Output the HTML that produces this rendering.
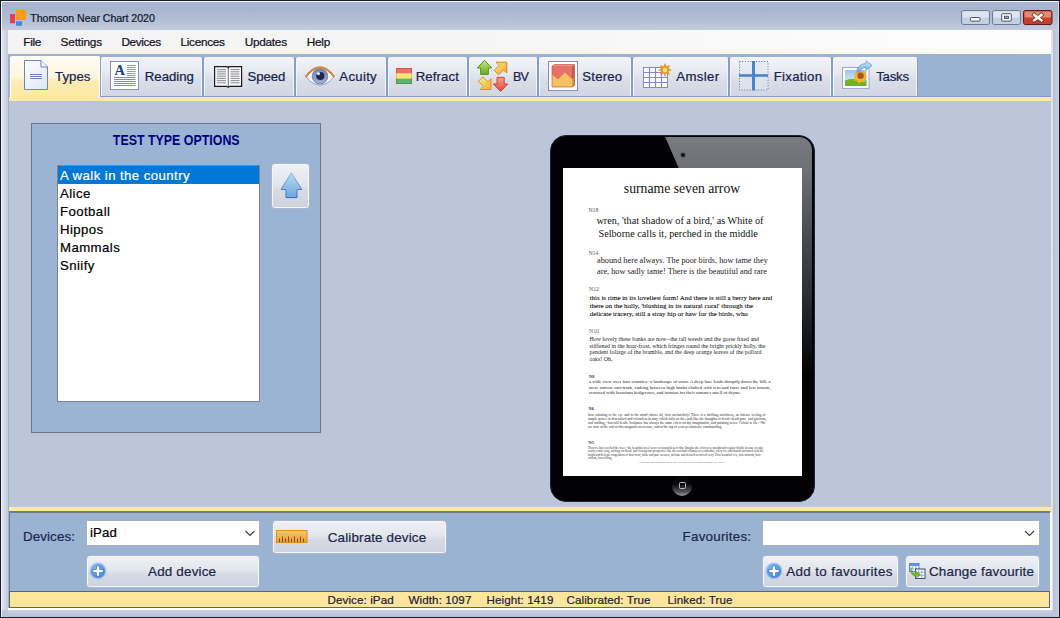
<!DOCTYPE html>
<html><head><meta charset="utf-8"><title>Thomson Near Chart 2020</title>
<style>
*{box-sizing:border-box;margin:0;padding:0}
html,body{width:1060px;height:618px;overflow:hidden}
body{position:relative;font-family:"Liberation Sans",sans-serif;color:#10182c;background:#b6c0d6}
#frame{position:absolute;left:0;top:0;width:1060px;height:618px;background:linear-gradient(180deg,#aab6ce 0px,#a7b5ce 8px,#b4c0d6 20px,#c3ccdf 29px,#c0c9dc 50%,#bcc5d9 100%);border:1px solid #161d2c;border-bottom-width:1.5px}
#frameHi{position:absolute;left:1px;top:1px;width:1058px;height:616px;border:1px solid #f2f4f9;border-right-color:#cfd5e3;border-bottom:none}
#frameL{position:absolute;left:2px;top:30px;width:7px;height:580px;background:linear-gradient(90deg,#dde2ed 0,#c4ccdd 85%,#9eb0cc 86%,#9eb0cc 100%)}
#frameR{position:absolute;left:1051px;top:30px;width:8px;height:580px;background:linear-gradient(90deg,#dde2ec 0,#dde2ec 20%,#b8c1d5 26%,#c7cede 100%)}
#whiteR{position:absolute;left:1050px;top:512px;width:2px;height:97px;background:#f4f6fa}
#frameB{position:absolute;left:8px;top:608px;width:1044px;height:9px;background:linear-gradient(180deg,#fff 0,#fff 22%,#cbd2e1 23%,#b5bed3 100%)}
.tx{position:absolute;white-space:nowrap;line-height:16px;-webkit-text-stroke:0.22px currentColor}
#menubar{position:absolute;left:8px;top:30px;width:1043px;height:24px;background:linear-gradient(180deg,rgba(255,255,255,0) 70%,rgba(250,240,215,0.45) 100%),linear-gradient(90deg,#f4f4f5 0,#f6f6f7 50%,#fcfcfd 85%,#fdfdfe 100%)}
#tabstrip{position:absolute;left:9px;top:54px;width:1042px;height:43px;background:#9bb3d3}
#tabline{position:absolute;left:9px;top:96px;width:1042px;height:1px;background:#7d9dca}
.tab{position:absolute;top:57px;height:39px;border:1px solid #f3f5fa;border-bottom:none;border-radius:2px 2px 0 0;background:linear-gradient(180deg,#f3f4f8 0,#e7eaf1 35%,#d9dde8 60%,#d0d6e2 100%);box-shadow:-1px 0 0 #7fa0cd,1px 0 0 #7fa0cd}
.tab.active{top:56px;height:42px;background:linear-gradient(180deg,#fffcf3 0,#fef6e0 48%,#fdecb4 60%,#fde9a3 100%);border-color:#fffdf6;box-shadow:none}
#ystrip1{position:absolute;left:9px;top:97px;width:1042px;height:4px;background:#fde9a3}
#content{position:absolute;left:9px;top:101px;width:1042px;height:406px;background:#bcc6db}
#ystrip2{position:absolute;left:9px;top:507px;width:1042px;height:4px;background:#fde9a3}
#bottom{position:absolute;left:9px;top:511px;width:1041px;height:81px;background:#9bb3d3;border-top:2px solid #747c8c;border-left:1px solid #747c8c}
#status{position:absolute;left:9px;top:591px;width:1041px;height:17px;background:#fde69c;border:1px solid #5c6575}
#panel{position:absolute;left:31px;top:123px;width:290px;height:310px;background:#9cb4d3;border:1px solid #6a7789}
#ptitle{position:absolute;left:31px;top:129.5px;width:290px;text-align:center;font-weight:bold;font-size:15.5px;line-height:19px;color:#000080;white-space:nowrap}
#ptitle span{display:inline-block;transform:scaleX(0.8);transform-origin:50% 50%}
#list{position:absolute;left:57px;top:165px;width:203px;height:237px;background:#fff;border:1px solid #7c8594}
#list div{position:absolute;left:0px;width:201px;height:18px;font-size:13.2px;line-height:20px;padding-left:2px;white-space:nowrap;color:#000;letter-spacing:0.43px;-webkit-text-stroke:0.2px currentColor}
#list div.sel{background:#0078d7;color:#fff}
.btn{position:absolute;border:1px solid #f4f6fa;border-radius:2.5px;background:linear-gradient(180deg,#eef0f5 0,#e3e6ed 45%,#d6dae3 60%,#ced3de 100%);box-shadow:0 0 0 1px #a9b8cf}
.combo{position:absolute;background:#fff;border:1px solid #a7afbf}
#ipad{position:absolute;left:550px;top:135px;width:265px;height:367px;border-radius:16px;background:#020204;border:1.5px solid #1a2434;overflow:hidden}
#glarebox{position:absolute;left:1px;top:1px;width:260px;height:362px;border-radius:13px;overflow:hidden}
#glare{position:absolute;left:-2.5px;top:-2.5px;width:265px;height:367px;background:linear-gradient(180deg,#797b81 0,#6e7076 35px,#4c4e54 95px,#2c2d32 160px,#020204 240px);clip-path:polygon(114.6px 0,265px 0,265px 367px,274px 367px)}
#cam{position:absolute;left:130.2px;top:17px;width:4px;height:4px;border-radius:50%;background:#141518;box-shadow:0 0 0 0.7px #5b5d63}
#home{position:absolute;left:121px;top:340px;width:20px;height:20px;border-radius:50%;background:linear-gradient(180deg,#050506 0,#0a0a0c 40%,#55565a 80%,#9a9b9f 100%)}
#home i{position:absolute;left:6.5px;top:6px;width:7px;height:7px;border:1px solid #b8b9bd;border-radius:1.5px}
#screen{position:absolute;left:563px;top:168px;width:238.5px;height:308px;background:#fff;overflow:hidden;font-family:"Liberation Serif",serif}
.tl{position:absolute;white-space:nowrap;line-height:1}
svg{position:absolute;overflow:visible}
</style></head><body>
<div id="frame"></div><div id="frameHi"></div><div id="frameL"></div><div id="frameR"></div><div id="frameB"></div><div id="whiteR"></div>
<div class="tx " style="left:30.3px;top:9.93px;font-size:10.6px;letter-spacing:-0.041px;">Thomson Near Chart 2020</div>
<div id="menubar"></div>
<div class="tx " style="left:23.3px;top:33.81px;font-size:11.8px;letter-spacing:-0.304px;color:#14101e;">File</div>
<div class="tx " style="left:60.5px;top:33.81px;font-size:11.8px;letter-spacing:-0.143px;color:#14101e;">Settings</div>
<div class="tx " style="left:121.4px;top:33.81px;font-size:11.8px;letter-spacing:-0.381px;color:#14101e;">Devices</div>
<div class="tx " style="left:180.5px;top:33.81px;font-size:11.8px;letter-spacing:-0.295px;color:#14101e;">Licences</div>
<div class="tx " style="left:244.7px;top:33.81px;font-size:11.8px;letter-spacing:-0.265px;color:#14101e;">Updates</div>
<div class="tx " style="left:306.7px;top:33.81px;font-size:11.8px;letter-spacing:-0.216px;color:#14101e;">Help</div>
<div id="tabstrip"></div><div id="tabline"></div>
<div id="ystrip1"></div>
<div class="tab active" style="left:10px;width:90px"></div>
<div class="tab" style="left:101px;width:101px"></div>
<div class="tab" style="left:204px;width:90px"></div>
<div class="tab" style="left:296px;width:90px"></div>
<div class="tab" style="left:388px;width:79px"></div>
<div class="tab" style="left:469px;width:68px"></div>
<div class="tab" style="left:539px;width:92px"></div>
<div class="tab" style="left:633px;width:95px"></div>
<div class="tab" style="left:730px;width:101px"></div>
<div class="tab" style="left:833px;width:84px"></div>
<div class="tx " style="left:55.1px;top:68.93px;font-size:13.2px;letter-spacing:0.042px;color:#16234c;">Types</div>
<div class="tx " style="left:144.8px;top:68.93px;font-size:13.2px;letter-spacing:-0.004px;color:#16234c;">Reading</div>
<div class="tx " style="left:247.6px;top:68.93px;font-size:13.2px;letter-spacing:-0.068px;color:#16234c;">Speed</div>
<div class="tx " style="left:339.3px;top:68.93px;font-size:13.2px;letter-spacing:0.296px;color:#16234c;">Acuity</div>
<div class="tx " style="left:415.7px;top:68.93px;font-size:13.2px;letter-spacing:0.112px;color:#16234c;">Refract</div>
<div class="tx " style="left:512.9px;top:69.13px;font-size:12.6px;letter-spacing:-0.806px;color:#16234c;">BV</div>
<div class="tx " style="left:582.3px;top:68.93px;font-size:13.2px;letter-spacing:0.207px;color:#16234c;">Stereo</div>
<div class="tx " style="left:676.2px;top:68.93px;font-size:13.2px;letter-spacing:0.395px;color:#16234c;">Amsler</div>
<div class="tx " style="left:773.7px;top:68.93px;font-size:13.2px;letter-spacing:0.302px;color:#16234c;">Fixation</div>
<div class="tx " style="left:876.2px;top:68.93px;font-size:13.2px;letter-spacing:-0.224px;color:#16234c;">Tasks</div>
<div id="content"></div>
<div id="ystrip2"></div>
<div id="bottom"></div>
<div id="panel"></div>
<div id="ptitle"><span>TEST TYPE OPTIONS</span></div>
<div id="list">
<div class="sel" style="top:0px">A walk in the country</div>
<div style="top:18px">Alice</div>
<div style="top:36px">Football</div>
<div style="top:54px">Hippos</div>
<div style="top:72px">Mammals</div>
<div style="top:90px">Sniify</div>
</div>
<div class="btn" style="left:272px;top:164px;width:37px;height:44px"></div>
<div id="ipad"><div id="glarebox"><div id="glare"></div></div><div id="cam"></div><div id="home"><i></i></div></div>
<div id="screen">
<div class="tl" style="left:0.00px;top:13.83px;font-size:13.7px;color:#111;width:238.00px;text-align:center;">surname seven arrow</div>
<div class="tl" style="left:25.40px;top:39.94px;font-size:5.8px;color:#555;">N18</div>
<div class="tl" style="left:33.50px;top:48.26px;font-size:10.2px;color:#111;">wren, 'that shadow of a bird,' as White of</div>
<div class="tl" style="left:35.50px;top:60.76px;font-size:10.2px;color:#111;">Selborne calls it, perched in the middle</div>
<div class="tl" style="left:25.40px;top:82.94px;font-size:5.8px;color:#555;">N14</div>
<div class="tl" style="left:34.00px;top:89.38px;font-size:8.26px;color:#222;">abound here always. The poor birds, how tame they</div>
<div class="tl" style="left:34.00px;top:99.68px;font-size:8.26px;color:#222;">are, how sadly tame! There is the beautiful and rare</div>
<div class="tl" style="left:26.00px;top:118.94px;font-size:5.8px;color:#555;">N12</div>
<div class="tl" style="left:26.70px;top:126.50px;font-size:6.93px;color:#000;-webkit-text-stroke:0.06px #000;">this is rime in its loveliest form! And there is still a berry here and</div>
<div class="tl" style="left:26.70px;top:134.60px;font-size:6.93px;color:#000;-webkit-text-stroke:0.06px #000;">there on the holly, 'blushing in its natural coral' through the</div>
<div class="tl" style="left:26.70px;top:142.80px;font-size:6.93px;color:#000;-webkit-text-stroke:0.06px #000;">delicate tracery, still a stray hip or haw for the birds, who</div>
<div class="tl" style="left:26.00px;top:160.94px;font-size:5.8px;color:#666;">N10</div>
<div class="tl" style="left:26.50px;top:169.06px;font-size:5.9px;color:#262626;">How lovely these banks are now--the tall weeds and the gorse fixed and</div>
<div class="tl" style="left:26.50px;top:175.76px;font-size:5.9px;color:#262626;">stiffened in the hoar-frost, which fringes round the bright prickly holly, the</div>
<div class="tl" style="left:26.50px;top:182.46px;font-size:5.9px;color:#262626;">pendent foliage of the bramble, and the deep orange leaves of the pollard</div>
<div class="tl" style="left:26.50px;top:189.06px;font-size:5.9px;color:#262626;">oaks! Oh,</div>
<div class="tl" style="left:26.00px;top:206.62px;font-size:4.4px;color:#333;font-weight:bold;">N8</div>
<div class="tl" style="left:26.00px;top:212.37px;font-size:4.69px;color:#222;width:181.50px;text-align:justify;text-align-last:justify;">a wide view over four counties--a landscape of snow. A deep lane leads abruptly down the hill; a</div>
<div class="tl" style="left:26.00px;top:217.77px;font-size:4.69px;color:#222;width:181.50px;text-align:justify;text-align-last:justify;">mere narrow cart-track, sinking between high banks clothed with fern and furze and low broom,</div>
<div class="tl" style="left:26.00px;top:223.17px;font-size:4.69px;color:#222;">crowned with luxuriant hedgerows, and famous for their summer smell of thyme.</div>
<div class="tl" style="left:25.50px;top:239.31px;font-size:4.4px;color:#333;font-weight:bold;">N6</div>
<div class="tl" style="left:25.00px;top:245.95px;font-size:3.54px;color:#2a2a2a;width:177.50px;text-align:justify;text-align-last:justify;">how satiating to the eye and to the mind--above all, how melancholy! There is a thrilling awfulness, an intense feeling of</div>
<div class="tl" style="left:25.00px;top:249.95px;font-size:3.54px;color:#2a2a2a;width:177.50px;text-align:justify;text-align-last:justify;">simple power in that naked and colourless beauty, which falls on the earth like the thoughts of death--death pure, and glorious,</div>
<div class="tl" style="left:25.00px;top:253.90px;font-size:3.54px;color:#2a2a2a;width:177.50px;text-align:justify;text-align-last:justify;">and smiling,--but still death. Sculpture has always the same effect on my imagination, and painting never. Colour is life.--We</div>
<div class="tl" style="left:25.00px;top:257.85px;font-size:3.54px;color:#2a2a2a;">are now at the end of this magnificent avenue, and at the top of a steep eminence commanding</div>
<div class="tl" style="left:25.50px;top:272.62px;font-size:4.4px;color:#333;font-weight:bold;">N5</div>
<div class="tl" style="left:25.00px;top:278.99px;font-size:2.97px;color:#333;">Now we have reached the trees,--the beautiful trees! never so beautiful as to-day. Imagine the effect of a straight and regular double avenue of oaks,</div>
<div class="tl" style="left:25.00px;top:282.39px;font-size:2.97px;color:#333;">nearly a mile long, arching overhead, and closing into perspective like the roof and columns of a cathedral, every tree and branch incrusted with the</div>
<div class="tl" style="left:25.00px;top:285.69px;font-size:2.97px;color:#333;">bright and delicate congelation of hoar-frost, white and pure as snow, delicate and defined as carved ivory. How beautiful it is, how uniform, how</div>
<div class="tl" style="left:25.00px;top:289.09px;font-size:2.97px;color:#333;">various, how filling,</div>
<div class="tl" style="left:0.00px;top:294.31px;font-size:2.5px;color:#555;width:238.00px;text-align:center;">Calibrated when displayed on an iPad. For other devices please recalibrate the screen.</div>
</div>
<div class="combo" style="left:86px;top:520px;width:174px;height:26px"><div class="tx" style="left:3px;top:3.9px;font-size:13.2px;color:#000;letter-spacing:0.15px">iPad</div></div>
<div class="btn" style="left:87px;top:556px;width:172px;height:31px"></div>
<div class="btn" style="left:273px;top:521px;width:173px;height:32px"></div>
<div class="combo" style="left:762px;top:520px;width:278px;height:26px"></div>
<div class="btn" style="left:763px;top:556px;width:135px;height:31px"></div>
<div class="btn" style="left:906px;top:556px;width:133px;height:31px"></div>
<div class="tx " style="left:327.7px;top:529.56px;font-size:13.4px;letter-spacing:0.161px;color:#1b274a;">Calibrate device</div>
<div class="tx " style="left:148.1px;top:564.06px;font-size:13.4px;letter-spacing:0.183px;color:#1b274a;">Add device</div>
<div class="tx " style="left:786.2px;top:564.06px;font-size:13.4px;letter-spacing:0.359px;color:#1b274a;">Add to favourites</div>
<div class="tx " style="left:929.0px;top:564.06px;font-size:13.4px;letter-spacing:0.200px;color:#1b274a;">Change favourite</div>
<div class="tx " style="left:23.0px;top:528.66px;font-size:13.4px;letter-spacing:0.080px;color:#1b274a;">Devices:</div>
<div class="tx " style="left:682.6px;top:528.66px;font-size:13.4px;letter-spacing:0.224px;color:#1b274a;">Favourites:</div>
<div id="status">
<div class="tx" style="left:317.5px;top:-0.5px;font-size:11.6px;color:#1c2238;letter-spacing:0.1px">Device: iPad</div>
<div class="tx" style="left:398.5px;top:-0.5px;font-size:11.6px;color:#1c2238;letter-spacing:0.1px">Width: 1097</div>
<div class="tx" style="left:476.5px;top:-0.5px;font-size:11.6px;color:#1c2238;letter-spacing:0.1px">Height: 1419</div>
<div class="tx" style="left:556.5px;top:-0.5px;font-size:11.6px;color:#1c2238;letter-spacing:0.1px">Calibrated: True</div>
<div class="tx" style="left:657.5px;top:-0.5px;font-size:11.6px;color:#1c2238;letter-spacing:0.1px">Linked: True</div>
</div>
<svg id="icons" width="1060" height="618" viewBox="0 0 1060 618" style="left:0;top:0">
<defs>
<linearGradient id="gDoc" x1="0" y1="0" x2="1" y2="1"><stop offset="0" stop-color="#ffffff"/><stop offset="1" stop-color="#dde4f4"/></linearGradient>
<linearGradient id="gGreen" x1="0" y1="0" x2="0" y2="1"><stop offset="0" stop-color="#c4e878"/><stop offset="1" stop-color="#6aa82c"/></linearGradient>
<linearGradient id="gOrange" x1="0" y1="0" x2="1" y2="1"><stop offset="0" stop-color="#fde48c"/><stop offset="1" stop-color="#f0a428"/></linearGradient>
<linearGradient id="gYellow" x1="0" y1="0" x2="1" y2="1"><stop offset="0" stop-color="#fdf0a0"/><stop offset="1" stop-color="#f0b030"/></linearGradient>
<linearGradient id="gRed" x1="0" y1="0" x2="0" y2="1"><stop offset="0" stop-color="#f8a090"/><stop offset="1" stop-color="#e04838"/></linearGradient>
<linearGradient id="gRuler" x1="0" y1="0" x2="0" y2="1"><stop offset="0" stop-color="#fbc878"/><stop offset="1" stop-color="#f09a28"/></linearGradient>
<radialGradient id="gPlus" cx="0.4" cy="0.35" r="0.7"><stop offset="0" stop-color="#8cc0f4"/><stop offset="1" stop-color="#3f7fd0"/></radialGradient>
<linearGradient id="gArrow" x1="0" y1="0" x2="0" y2="1"><stop offset="0" stop-color="#e0f0fc"/><stop offset="1" stop-color="#5aa0e0"/></linearGradient>
<linearGradient id="gSky" x1="0" y1="0" x2="0" y2="1"><stop offset="0" stop-color="#9cc8f0"/><stop offset="1" stop-color="#e4f2fa"/></linearGradient>
<linearGradient id="gIris" x1="0" y1="0" x2="0" y2="1"><stop offset="0" stop-color="#7683ae"/><stop offset="1" stop-color="#a4b0d4"/></linearGradient>
<linearGradient id="gArrow2" x1="0" y1="0" x2="0" y2="1"><stop offset="0" stop-color="#b8dcf4"/><stop offset="1" stop-color="#6ea8dc"/></linearGradient>
<linearGradient id="gArrowS" x1="0" y1="0" x2="0" y2="1"><stop offset="0" stop-color="#8cb8e0"/><stop offset="1" stop-color="#3468bc"/></linearGradient>
</defs>
<!-- Types: document -->
<g>
<path d="M24.5 60.5 H41 L47.5 67 V89.5 H24.5 Z" fill="url(#gDoc)" stroke="#6f84c4" stroke-width="1"/>
<path d="M41 60.5 V67 H47.5" fill="#f4f6fc" stroke="#6f84c4" stroke-width="1"/>
<path d="M30 74.5 H42 M30 76.5 H42 M30 78.5 H42" stroke="#6e86cc" stroke-width="1"/>
</g>
<!-- Reading -->
<g>
<rect x="110.5" y="61.5" width="28" height="28" fill="#fff" stroke="#868cc6" stroke-width="1"/>
<text x="114.6" y="75.2" font-family="Liberation Serif, serif" font-weight="bold" font-size="14.5" fill="#1d3a80">A</text>
<path d="M127 65.5 H135.5 M127 67.5 H135.5 M127 69.5 H135.5 M127 71.5 H135.5 M127 73.5 H135.5 M127 75.5 H135.5" stroke="#8c96cc" stroke-width="1"/>
<path d="M114 77.5 H135.5 M114 79.5 H135.5 M114 81.5 H135.5 M114 83.5 H135.5 M114 85.5 H135.5" stroke="#7e88c6" stroke-width="1"/>
</g>
<!-- Speed: book -->
<g>
<path d="M214.6 66.6 H226.5 Q228 66.6 228.3 67.6 Q228.6 66.6 230 66.6 H241.6 V86.4 H230 Q228.6 86.4 228.3 87.6 Q228 86.4 226.5 86.4 H214.6 Z" fill="#f6f6f7" stroke="#1e1e22" stroke-width="1.2"/>
<path d="M228.3 68 V87" stroke="#55565c" stroke-width="0.8"/>
<path d="M217 69.6 H226 M217 71.8 H226 M217 74 H226 M217 76.2 H226 M217 78.4 H226 M217 80.6 H226 M217 82.8 H226 M230.6 69.6 H239.4 M230.6 71.8 H239.4 M230.6 74 H239.4 M230.6 76.2 H239.4 M230.6 78.4 H239.4 M230.6 80.6 H239.4 M230.6 82.8 H239.4" stroke="#8c8d92" stroke-width="1"/>
</g>
<!-- Acuity: eye -->
<g>
<path d="M306 76.8 Q320 58.5 334 76.8 Q320 93.5 306 76.8 Z" fill="#fbfcff" stroke="#93a0d0" stroke-width="1"/>
<clipPath id="eyeclip"><path d="M306 76.8 Q320 58.5 334 76.8 Q320 93.5 306 76.8 Z"/></clipPath>
<g clip-path="url(#eyeclip)">
<circle cx="320" cy="76.2" r="7.8" fill="url(#gIris)" stroke="#6773a4" stroke-width="0.8"/>
<circle cx="320.3" cy="76" r="4.1" fill="#1b2750"/>
<circle cx="318.4" cy="73.6" r="1.6" fill="#e8eefc"/>
</g>
<path d="M306.2 76.3 Q320 58.2 333.8 76.3" fill="none" stroke="#cf8a3e" stroke-width="2.2" stroke-linecap="round"/>
</g>
<!-- Refract -->
<g>
<rect x="396" y="68" width="16" height="5.6" fill="#ee6e6c"/>
<rect x="396" y="73.4" width="16" height="5.4" fill="#fbe46c"/>
<rect x="396" y="78.6" width="16" height="5.4" fill="#5cb468"/>
<rect x="396.5" y="68.5" width="15" height="15" fill="none" stroke="#000" stroke-opacity="0.15"/>
</g>
<!-- BV arrows -->
<g stroke-width="1" stroke-linejoin="round">
<path d="M484.5 60.3 L491.8 68 H488.4 V74.4 H480.6 V68 H477.2 Z" fill="url(#gGreen)" stroke="#5a9424"/>
<path d="M496 62.2 H506.8 V73 L503.6 69.8 L498.6 74.8 L494.2 70.4 L499.2 65.4 Z" fill="url(#gOrange)" stroke="#dc8414"/>
<path d="M480.2 89.5 H491 V78.7 L487.8 81.9 L482.8 76.9 L478.4 81.3 L483.4 86.3 Z" fill="url(#gYellow)" stroke="#e0901c"/>
<path d="M500.6 91.4 L493.4 84 H497 V77.4 H504.2 V84 H507.8 Z" fill="url(#gRed)" stroke="#d2402e"/>
</g>
<!-- Stereo -->
<g>
<rect x="548.5" y="61.5" width="29" height="29" fill="#fff" stroke="#868cc6" stroke-width="1"/>
<path d="M552 66 L554.5 64.5 H574.5 L572 66 Z" fill="#f0948a"/>
<path d="M572 66 L574.5 64.5 V85.5 L572 87 Z" fill="#c85a44"/>
<rect x="552" y="66" width="20" height="21" fill="#e8726a"/>
<path d="M552 74.5 L558 79.5 L565 72.5 L572 79 V87 H552 Z" fill="#f4c264"/>
<path d="M572 79 L574.5 77.5 V85.5 L572 87 Z" fill="#d69438"/>
<path d="M552 66 L554.5 64.5 H574.5 V85.5 L572 87 H552 Z" fill="none" stroke="#c45a38" stroke-width="0.7"/>
</g>
<!-- Amsler -->
<g>
<rect x="643.5" y="67.5" width="24" height="20" fill="#fdfdff" stroke="#8a88cc" stroke-width="1"/>
<path d="M649.5 67.5 V87.5 M655.5 67.5 V87.5 M661.5 67.5 V87.5 M643.5 72.5 H667.5 M643.5 77.5 H667.5 M643.5 82.5 H667.5" stroke="#8a88cc" stroke-width="1.2"/>
<g transform="translate(665 70) scale(0.88) translate(-665.5 -70)"><path d="M665.5 62.8 L667 66.4 L670.6 64.9 L669.1 68.5 L672.7 70 L669.1 71.5 L670.6 75.1 L667 73.6 L665.5 77.2 L664 73.6 L660.4 75.1 L661.9 71.5 L658.3 70 L661.9 68.5 L660.4 64.9 L664 66.4 Z" fill="#eea022" stroke="#d88410" stroke-width="0.6"/>
<circle cx="665.5" cy="70" r="2.6" fill="#fde472"/></g>
</g>
<!-- Fixation -->
<g>
<rect x="739.5" y="61.5" width="28.5" height="28.5" fill="#e4e8f2" fill-opacity="0.5" stroke="#5c78ae" stroke-width="1" stroke-dasharray="1 1.75"/>
<rect x="752" y="61" width="3" height="29.4" fill="#4a84cc"/>
<rect x="739" y="74.2" width="29" height="2.6" fill="#4a84cc"/>
</g>
<!-- Tasks -->
<g>
<rect x="842.5" y="67.5" width="26.5" height="21" fill="#fff" stroke="#a2a8d2" stroke-width="1"/>
<rect x="845" y="70" width="21.5" height="16" fill="url(#gSky)"/>
<path d="M845 80.5 Q852 78 858 80 T866.5 80 V86 H845 Z" fill="#6cb22e"/>
<g transform="translate(-1.2 0.6)"><circle cx="861.5" cy="76" r="6" fill="#f4a42a"/>
<path d="M861.5 69 L863 73 L867 71 L865 75 L869 77 L865 78 L866 82.5 L862.5 80 L860 83.5 L859 79.5 L855 80.5 L857.5 77 L854.5 74 L858.5 73.5 L858 69.5 L860.5 72.5 Z" fill="#f6b43a"/>
<circle cx="861.8" cy="75.2" r="3.2" fill="#a4581e"/>
</g>
<path d="M856.8 71.5 Q858 64 866 63.5 V60.8 L872 65.5 L866 70 V67.4 Q861 67.5 859.3 72.5 Z" fill="url(#gArrow)" stroke="#5c9cd6" stroke-width="0.8"/>
</g>
<!-- up arrow button icon -->
<path d="M291.4 172.8 L301.8 189.5 H297 V197.6 H286 V189.5 H281 Z" fill="url(#gArrow2)" stroke="url(#gArrowS)" stroke-width="1" stroke-linejoin="round"/>
<!-- ruler -->
<g>
<rect x="276.5" y="530.5" width="30.5" height="12" fill="url(#gRuler)" stroke="#e28c1e" stroke-width="1"/>
<path d="M279.5 542 V538.5 M282.5 542 V536.5 M285.5 542 V538.5 M288.5 542 V536.5 M291.5 542 V538.5 M294.5 542 V536.5 M297.5 542 V538.5 M300.5 542 V536.5 M303.5 542 V538.5" stroke="#8a4a10" stroke-width="1"/>
</g>
<!-- plus icons -->
<g id="plus1">
<circle cx="98" cy="571" r="7.8" fill="url(#gPlus)" stroke="#a4c6ee" stroke-width="1.4"/>
<path d="M96.4 565.8 H99.6 V569.4 H103.2 V572.6 H99.6 V576.2 H96.4 V572.6 H92.8 V569.4 H96.4 Z" fill="#fff" stroke="#2f6cc0" stroke-width="0.7"/>
</g>
<g transform="translate(676 0)">
<circle cx="98" cy="571" r="7.8" fill="url(#gPlus)" stroke="#a4c6ee" stroke-width="1.4"/>
<path d="M96.4 565.8 H99.6 V569.4 H103.2 V572.6 H99.6 V576.2 H96.4 V572.6 H92.8 V569.4 H96.4 Z" fill="#fff" stroke="#2f6cc0" stroke-width="0.7"/>
</g>
<!-- change favourite icon -->
<g>
<rect x="909.5" y="563.5" width="9.5" height="8" fill="#fff" stroke="#5a88d0" stroke-width="1"/>
<rect x="909.5" y="563.5" width="9.5" height="2.6" fill="#5a90d8"/>
<path d="M912.7 563.5 V571.5 M915.9 563.5 V571.5 M909.5 568.8 H919" stroke="#7aa0dc" stroke-width="0.7"/>
<rect x="915.5" y="569" width="9.5" height="9.5" fill="#fff" stroke="#3c4a82" stroke-width="1"/>
<path d="M918.7 569 V578.5 M921.9 569 V578.5 M915.5 572.2 H925 M915.5 575.4 H925" stroke="#8a94c0" stroke-width="0.7"/>
<path d="M911 567.5 Q911 573.5 915.5 573.4 V571 L920.5 574.6 L915.5 578 V575.8 Q910 575.8 911 567.5 Z" fill="#7cbc28" stroke="#4e8c14" stroke-width="0.6"/>
</g>
<!-- combo chevrons -->
<path d="M245.5 531 L250 535.5 L254.5 531" fill="none" stroke="#3a3f4c" stroke-width="1.2"/>
<path d="M1025 531 L1029.5 535.5 L1034 531" fill="none" stroke="#3a3f4c" stroke-width="1.2"/>
<!-- title icon -->
<rect x="10" y="14" width="5" height="9.3" fill="#ee3a50"/>
<rect x="16" y="10" width="10" height="10" fill="#fd9c0c"/>
<rect x="16" y="21.3" width="6" height="4.4" fill="#4a86d8"/>
<!-- window buttons -->
<g>
<rect x="961.5" y="10.5" width="28" height="14" rx="2" fill="#c4d0e2" stroke="#6c7c98"/>
<rect x="962.5" y="11.5" width="26" height="6" rx="1" fill="#dde5f0"/>
<rect x="970.5" y="17.5" width="9.5" height="3.6" rx="0.8" fill="#fdfaf4" stroke="#3c4458" stroke-width="0.9"/>
<rect x="992.5" y="10.5" width="28" height="14" rx="2" fill="#c4d0e2" stroke="#6c7c98"/>
<rect x="993.5" y="11.5" width="26" height="6" rx="1" fill="#dde5f0"/>
<rect x="1001.7" y="13.7" width="9.6" height="7.4" rx="0.8" fill="#fdfdfd" stroke="#3c4458" stroke-width="0.9"/>
<rect x="1004.6" y="16.2" width="3.8" height="2.4" fill="#9aa6c0" stroke="#3c4458" stroke-width="0.8"/>
<rect x="1023.5" y="10.5" width="28.5" height="14" rx="2" fill="#c8402c" stroke="#5c1c18"/>
<rect x="1024.5" y="11.5" width="26.5" height="6" rx="1" fill="#e08c78"/>
<path d="M1034.2 14.9 L1041.4 20.3 M1041.4 14.9 L1034.2 20.3" stroke="#6c2a20" stroke-width="4" stroke-linecap="square"/>
<path d="M1034.2 14.9 L1041.4 20.3 M1041.4 14.9 L1034.2 20.3" stroke="#fbf6f2" stroke-width="2.6" stroke-linecap="square"/>
</g>
</svg>

</body></html>
